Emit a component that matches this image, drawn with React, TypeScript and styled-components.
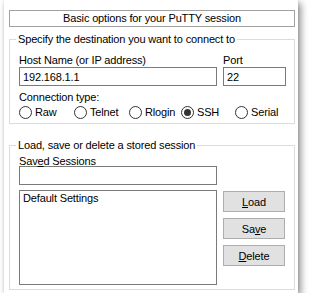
import React, { useState } from 'react';
import styled, { createGlobalStyle } from 'styled-components';

const GlobalStyle = createGlobalStyle`
  html, body {
    margin: 0;
    padding: 0;
    background: #ffffff;
  }
  body {
    font-family: "Liberation Sans", Arial, sans-serif;
    font-size: 11px;
    letter-spacing: -0.15px;
    color: #000;
  }
`;

const Window = styled.div`
  box-sizing: border-box;
  width: 294px;
  margin-left: 4px;
  padding: 10px 3px 3px 5px;
  background: #ffffff;
  box-shadow: 3px 3px 7px rgba(0, 0, 0, 0.42), 0 0 3px rgba(0, 0, 0, 0.12);
  display: flex;
  flex-direction: column;
`;

const TitleBox = styled.div`
  box-sizing: border-box;
  height: 17px;
  border: 1px solid #a0a0a0;
  display: flex;
  align-items: center;
  justify-content: center;
  line-height: 13px;
`;

const Group = styled.div<{ $top: number; $pad: string }>`
  position: relative;
  margin-top: ${(p) => p.$top}px;
  border: 1px solid #dcdcdc;
  padding: ${(p) => p.$pad};
`;

const Legend = styled.span`
  position: absolute;
  top: -8px;
  left: 6px;
  padding: 0 2px;
  background: #ffffff;
  line-height: 14px;
`;

const HostGrid = styled.div`
  display: grid;
  grid-template-columns: 198px 63px;
  column-gap: 6px;
`;

const Label = styled.div<{ $h?: number; $lh?: number; $top?: number }>`
  position: relative;
  z-index: 1;
  height: ${(p) => p.$h ?? 14}px;
  line-height: ${(p) => p.$lh ?? p.$h ?? 14}px;
  margin-top: ${(p) => p.$top ?? 0}px;
  white-space: nowrap;
`;

const TextBox = styled.input<{ $w: number }>`
  display: block;
  box-sizing: border-box;
  width: ${(p) => p.$w}px;
  height: 19px;
  margin: 0;
  padding: 0 3px;
  border: 1px solid #7a7a7a;
  background: #ffffff;
  font-family: inherit;
  font-size: 11px;
  letter-spacing: inherit;
  color: #000;
  outline: none;
`;

const RadioRow = styled.div`
  display: grid;
  grid-template-columns: 55px 55px 52px 54px 50px;
  height: 13px;
  margin-top: 2px;
`;

const RadioItem = styled.label`
  display: flex;
  align-items: center;
  gap: 3px;
  height: 13px;
  line-height: 13px;
  cursor: default;
`;

const RadioCircle = styled.span<{ $on: boolean }>`
  box-sizing: border-box;
  width: 13px;
  height: 13px;
  border: 1px solid #333333;
  border-radius: 50%;
  background: #ffffff;
  display: flex;
  align-items: center;
  justify-content: center;
  flex-shrink: 0;

  &::after {
    content: '';
    display: ${(p) => (p.$on ? 'block' : 'none')};
    width: 7px;
    height: 7px;
    border-radius: 50%;
    background: #333333;
  }
`;

const SessionRow = styled.div`
  display: flex;
  gap: 6px;
  margin-top: 5px;
`;

const ListBox = styled.div`
  box-sizing: border-box;
  width: 198px;
  height: 95px;
  border: 1px solid #7a7a7a;
  padding: 1px 3px;
  line-height: 13px;
`;

const ButtonColumn = styled.div`
  display: flex;
  flex-direction: column;
  gap: 6px;
  margin-top: 1px;
`;

const Button = styled.button`
  box-sizing: border-box;
  width: 62px;
  height: 21px;
  margin: 0;
  padding: 0;
  border: 1px solid #adadad;
  background: #e1e1e1;
  font-family: inherit;
  font-size: 11px;
  letter-spacing: inherit;
  color: #000;
  cursor: default;
`;

const Key = styled.span`
  text-decoration: underline;
`;

const protocols = ['Raw', 'Telnet', 'Rlogin', 'SSH', 'Serial'];

const App: React.FC = () => {
  const [host, setHost] = useState('192.168.1.1');
  const [port, setPort] = useState('22');
  const [protocol, setProtocol] = useState('SSH');
  const [saved, setSaved] = useState('');

  return (
    <>
      <GlobalStyle />
      <Window>
        <TitleBox>Basic options for your PuTTY session</TitleBox>

        <Group $top={12} $pad="13px 9px 4px 9px">
          <Legend>Specify the destination you want to connect to</Legend>
          <HostGrid>
            <Label>Host Name (or IP address)</Label>
            <Label>Port</Label>
            <TextBox $w={198} value={host} onChange={(e) => setHost(e.target.value)} />
            <TextBox $w={63} value={port} onChange={(e) => setPort(e.target.value)} />
          </HostGrid>
          <Label $h={13} $top={5}>Connection type:</Label>
          <RadioRow>
            {protocols.map((p) => (
              <RadioItem key={p} onClick={() => setProtocol(p)}>
                <RadioCircle $on={protocol === p} />
                {p}
              </RadioItem>
            ))}
          </RadioRow>
        </Group>

        <Group $top={21} $pad="9px 9px 4px 9px">
          <Legend>Load, save or delete a stored session</Legend>
          <Label $h={11} $lh={13}>
            Sav<Key>e</Key>d Sessions
          </Label>
          <TextBox $w={198} value={saved} onChange={(e) => setSaved(e.target.value)} />
          <SessionRow>
            <ListBox>Default Settings</ListBox>
            <ButtonColumn>
              <Button>
                <Key>L</Key>oad
              </Button>
              <Button>
                Sa<Key>v</Key>e
              </Button>
              <Button>
                <Key>D</Key>elete
              </Button>
            </ButtonColumn>
          </SessionRow>
        </Group>
      </Window>
    </>
  );
};

export default App;
